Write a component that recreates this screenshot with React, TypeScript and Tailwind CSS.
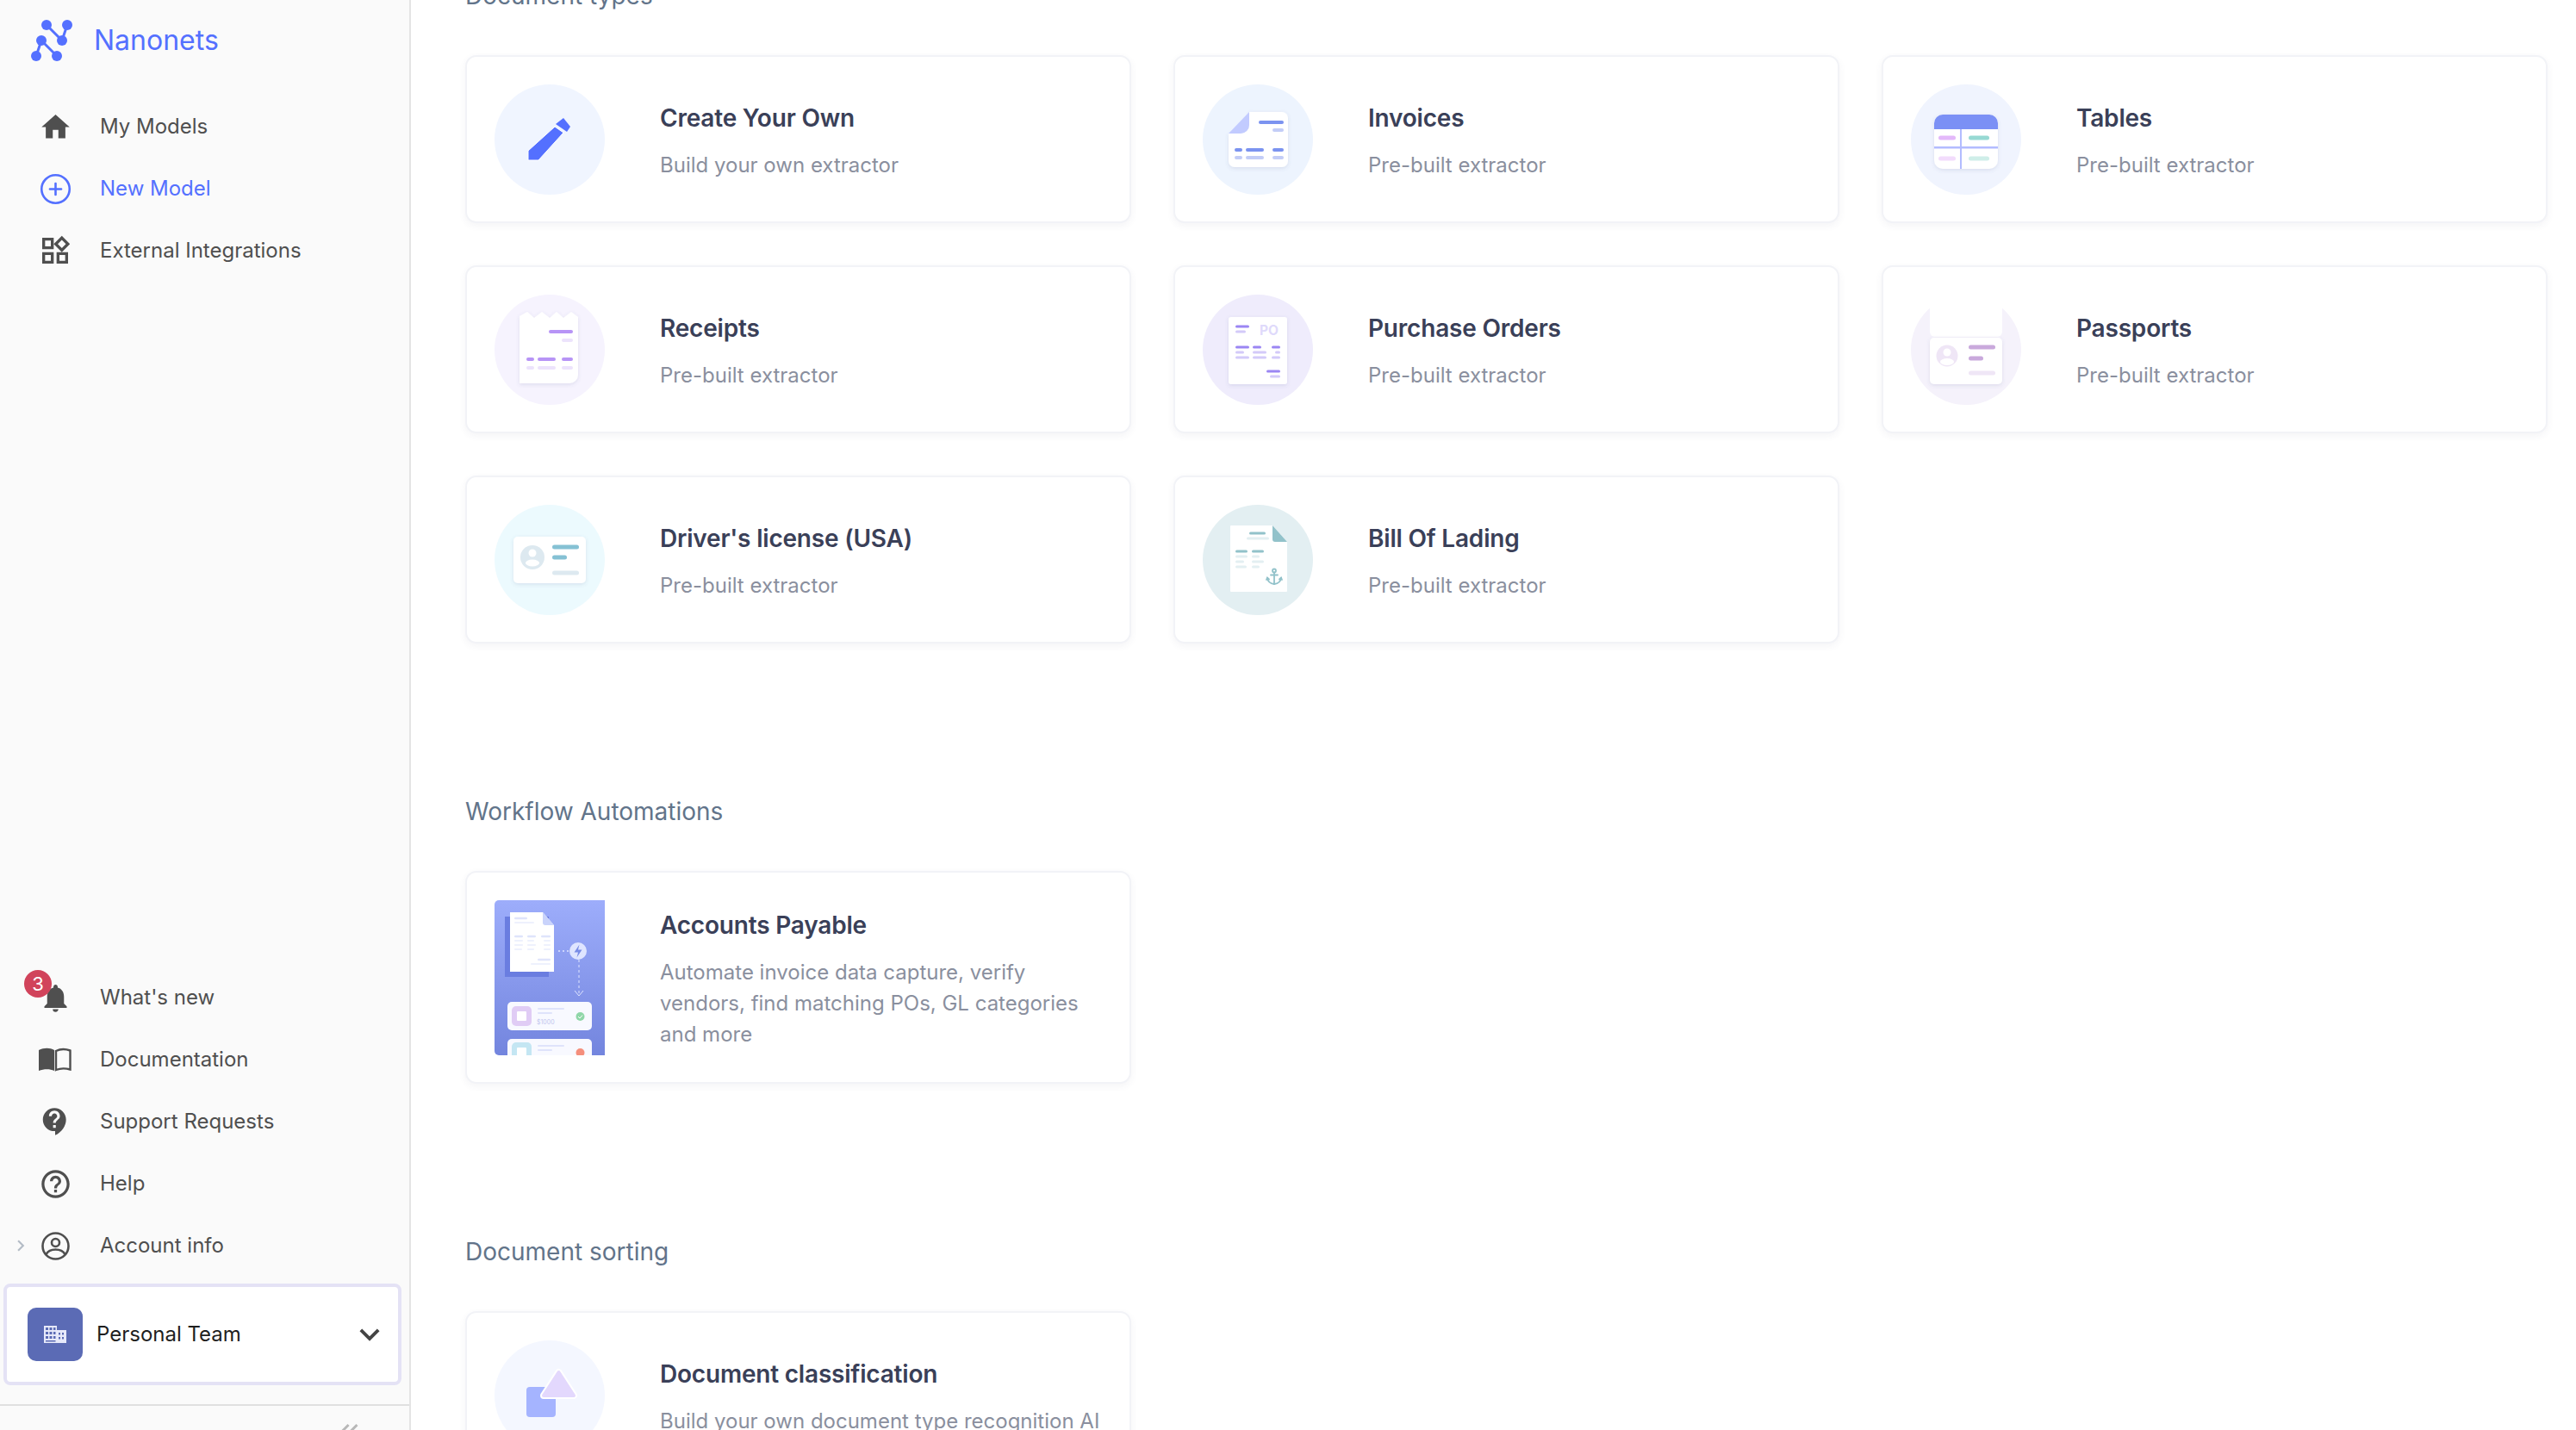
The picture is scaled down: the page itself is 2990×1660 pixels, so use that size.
import type { ReactNode } from 'react';
import { CirclePlus } from 'lucide-react';
import {
  MdChevronRight,
  MdContactSupport,
  MdExpandMore,
  MdHelpOutline,
  MdHome,
  MdKeyboardDoubleArrowLeft,
  MdNotifications,
  MdOutlineWidgets,
} from 'react-icons/md';

// rounded bar used by all the little document drawings
function Bar({ x1, x2, y, c, h = 4 }: { x1: number; x2: number; y: number; c: string; h?: number }) {
  return <rect x={x1} y={y - h / 2} width={x2 - x1} height={h} rx={h / 2} fill={c} />;
}

function Circle({ bg, children }: { bg: string; children: ReactNode }) {
  return (
    <svg viewBox="0 0 128 128" className="w-[128px] h-[128px] shrink-0">
      <defs>
        <filter id="soft" x="-20%" y="-20%" width="140%" height="140%">
          <feDropShadow dx="0" dy="1.5" stdDeviation="2" floodColor="#5a5f9a" floodOpacity="0.16" />
        </filter>
      </defs>
      <circle cx="64" cy="64" r="64" fill={bg} />
      {children}
    </svg>
  );
}

function PencilIcon() {
  return (
    <Circle bg="#f0f5ff">
      <path d="M39 77 L70 49 L80 56 L51 88 H39 Z" fill="#5470ff" stroke="#fff" strokeWidth="1" />
      <path d="M71 46 L80 39 L88 49 L84 55 Z" fill="#5470ff" />
    </Circle>
  );
}

function InvoiceIcon() {
  const d = '#7b93f0';
  const l = '#c3cdf7';
  return (
    <Circle bg="#edf4fe">
      <path
        d="M54 32 H92 a7 7 0 0 1 7 7 V89 a7 7 0 0 1 -7 7 H37 a7 7 0 0 1 -7 -7 V57 H44 a10 10 0 0 0 10 -10 Z"
        fill="#fff"
        filter="url(#soft)"
      />
      <path d="M30 57 L54 32 V47 a10 10 0 0 1 -10 10 Z" fill="#c2cbff" />
      <Bar x1={65} x2={94} y={44} c={d} />
      <Bar x1={81} x2={94} y={53} c={l} />
      <Bar x1={37} x2={46} y={76} c={d} />
      <Bar x1={50} x2={71} y={76} c={d} />
      <Bar x1={81} x2={94} y={76} c={d} />
      <Bar x1={37} x2={46} y={85} c={l} />
      <Bar x1={50} x2={71} y={85} c={l} />
      <Bar x1={81} x2={94} y={85} c={l} />
    </Circle>
  );
}

function TableIcon() {
  return (
    <Circle bg="#f0f4fe">
      <rect x="27" y="35" width="74" height="63" rx="10" fill="#fff" filter="url(#soft)" />
      <path d="M27 52 V45 a10 10 0 0 1 10 -10 H91 a10 10 0 0 1 10 10 V52 Z" fill="#7b90f5" />
      <rect x="57" y="52" width="2" height="46" fill="#b3bcff" />
      <rect x="27" y="72" width="74" height="2.5" fill="#b3bcff" />
      <Bar x1={32} x2={52} y={62} c="#e3b8fa" h={5} />
      <Bar x1={67} x2={91} y={62} c="#97d9d3" h={5} />
      <Bar x1={32} x2={52} y={86} c="#f2dcfc" h={5} />
      <Bar x1={67} x2={91} y={86} c="#cfeee9" h={5} />
    </Circle>
  );
}

function ReceiptIcon() {
  const d = '#b794f6';
  const l = '#ece3fc';
  return (
    <Circle bg="#f6f3fe">
      <path
        d="M29 25 L38 20 L46 27 L55 20 L64 27 L72 20 L80 27 L89 20 L97 26 V93 a10 10 0 0 1 -10 10 H29 Z"
        fill="#fff"
        filter="url(#soft)"
      />
      <Bar x1={63} x2={91} y={43} c={d} />
      <Bar x1={78} x2={91} y={53} c={l} />
      <Bar x1={37} x2={46} y={75} c={d} />
      <Bar x1={50} x2={71} y={75} c={d} />
      <Bar x1={78} x2={91} y={75} c={d} />
      <Bar x1={37} x2={46} y={85} c={l} />
      <Bar x1={50} x2={71} y={85} c={l} />
      <Bar x1={78} x2={91} y={85} c={l} />
    </Circle>
  );
}

function PurchaseIcon() {
  const d = '#9b86f3';
  const l = '#d3caf9';
  return (
    <Circle bg="#efecfc">
      <rect x="30" y="26" width="68" height="78" rx="3" fill="#fff" filter="url(#soft)" />
      <Bar x1={38} x2={54} y={37} c={d} h={3} />
      <Bar x1={38} x2={50} y={43} c={l} h={3} />
      <text x="66" y="47" fontFamily="Inter, sans-serif" fontWeight="700" fontSize="15.5" fill="#dfdafb">PO</text>
      <Bar x1={38} x2={54} y={61} c={d} h={3} />
      <Bar x1={58} x2={68} y={61} c={d} h={3} />
      <Bar x1={80} x2={90} y={61} c={d} h={3} />
      <Bar x1={38} x2={48} y={67} c={l} h={3} />
      <Bar x1={58} x2={74} y={67} c={l} h={3} />
      <Bar x1={84} x2={90} y={67} c={l} h={3} />
      <Bar x1={38} x2={54} y={73} c={l} h={3} />
      <Bar x1={58} x2={74} y={73} c={l} h={3} />
      <Bar x1={80} x2={90} y={73} c={l} h={3} />
      <Bar x1={74} x2={90} y={89} c={d} h={3} />
      <Bar x1={78} x2={90} y={95} c={l} h={3} />
    </Circle>
  );
}

function PassportIcon() {
  const d = '#c9a9dc';
  const l = '#efe6f6';
  return (
    <Circle bg="#f5f2fb">
      <path d="M22 0 H106 V43 a6 6 0 0 1 -6 6 H28 a6 6 0 0 1 -6 -6 Z" fill="#fff" />
      <rect x="22" y="50" width="84" height="54" rx="5" fill="#fff" filter="url(#soft)" />
      <clipPath id="pp-face">
        <circle cx="42" cy="71" r="12.5" />
      </clipPath>
      <circle cx="42" cy="71" r="12.5" fill={l} />
      <g clipPath="url(#pp-face)" fill="#fff">
        <circle cx="42" cy="67" r="4.5" />
        <ellipse cx="42" cy="78" rx="8" ry="4" />
      </g>
      <Bar x1={67} x2={98} y={61} c={d} h={5} />
      <Bar x1={67} x2={84} y={74} c={d} h={5} />
      <Bar x1={67} x2={98} y={91} c={l} h={5} />
    </Circle>
  );
}

function LicenseIcon() {
  const d = '#85c1d4';
  const l = '#dde9f0';
  return (
    <Circle bg="#ecfafe">
      <rect x="22" y="37" width="84" height="54" rx="5" fill="#fff" filter="url(#soft)" />
      <clipPath id="dl-face">
        <circle cx="44" cy="61" r="14" />
      </clipPath>
      <circle cx="44" cy="61" r="14" fill={l} />
      <g clipPath="url(#dl-face)" fill="#fff">
        <circle cx="44" cy="56" r="4.5" />
        <ellipse cx="44" cy="67.5" rx="8" ry="4" />
      </g>
      <Bar x1={67} x2={98} y={49} c={d} h={5} />
      <Bar x1={67} x2={84} y={61} c={d} h={5} />
      <Bar x1={67} x2={98} y={79} c={l} h={5} />
    </Circle>
  );
}

function LadingIcon() {
  const d = '#92c2ca';
  const l = '#e3eff2';
  return (
    <Circle bg="#e3eff2">
      <path d="M33 24 H81 L98 43 V100 a1 1 0 0 1 -1 1 H33 a1 1 0 0 1 -1 -1 V25 a1 1 0 0 1 1 -1 Z" fill="#fff" />
      <path d="M81 24 L98 43 H84 a3 3 0 0 1 -3 -3 Z" fill={d} />
      <Bar x1={54} x2={73} y={33} c={d} h={3} />
      <Bar x1={51} x2={77} y={39} c={l} h={3} />
      <Bar x1={38} x2={52} y={54} c={d} h={3} />
      <Bar x1={57} x2={71} y={54} c={d} h={3} />
      <Bar x1={38} x2={52} y={60} c={l} h={3} />
      <Bar x1={57} x2={66} y={60} c={l} h={3} />
      <Bar x1={38} x2={48} y={66} c={l} h={3} />
      <Bar x1={57} x2={71} y={66} c={l} h={3} />
      <Bar x1={38} x2={51} y={72} c={l} h={3} />
      <Bar x1={57} x2={66} y={72} c={l} h={3} />
      <g fill="none" stroke={d} strokeWidth="1.8" strokeLinecap="round">
        <circle cx="83" cy="76.5" r="2" />
        <path d="M83 78.5 V92 M79 81.5 H87" />
        <path d="M75 85 C75.5 89.5 79 91.5 83 92 C87 91.5 90.5 89.5 91 85" />
        <path d="M74 87 L75 84.5 L77 86.5 M92 87 L91 84.5 L89 86.5" />
      </g>
    </Circle>
  );
}

function SortingIcon() {
  return (
    <Circle bg="#f4f7ff">
      <rect x="37" y="54" width="34" height="35" rx="4" fill="#a5b4ff" />
      <path d="M74.5 37 L92 64 H57 Z" fill="#fff" stroke="#fff" strokeWidth="8" strokeLinejoin="round" />
      <path d="M74.5 37 L92 64 H57 Z" fill="#e3d8fd" stroke="#e3d8fd" strokeWidth="4" strokeLinejoin="round" />
    </Circle>
  );
}

function PayableArt() {
  return (
    <svg viewBox="0 0 128 180" className="w-[128px] h-[180px] shrink-0 rounded-l-[5px]">
      <defs>
        <linearGradient id="ap-bg" x1="0" y1="0" x2="0" y2="1">
          <stop offset="0" stopColor="#9dadfb" />
          <stop offset="1" stopColor="#7385de" />
        </linearGradient>
      </defs>
      <rect width="128" height="180" fill="url(#ap-bg)" />
      <rect x="12" y="19" width="51" height="70" fill="#6a7de0" />
      <path d="M18 14 H56 L69 29 V83 H18 Z" fill="#fff" />
      <path d="M56 14 L69 29 H59 a3 3 0 0 1 -3 -3 Z" fill="#c9d3fb" />
      <Bar x1={23} x2={38} y={21} c="#dfe4fb" h={2.5} />
      <Bar x1={23} x2={46} y={26} c="#eef1fd" h={2} />
      <Bar x1={23} x2={33} y={42} c="#dfe4fb" h={2.5} />
      <Bar x1={38} x2={48} y={42} c="#dfe4fb" h={2.5} />
      <Bar x1={54} x2={65} y={42} c="#dfe4fb" h={2.5} />
      <Bar x1={23} x2={33} y={47} c="#eef1fd" h={2} />
      <Bar x1={38} x2={46} y={47} c="#eef1fd" h={2} />
      <Bar x1={57} x2={65} y={47} c="#eef1fd" h={2} />
      <Bar x1={23} x2={33} y={52} c="#eef1fd" h={2} />
      <Bar x1={38} x2={48} y={52} c="#eef1fd" h={2} />
      <Bar x1={57} x2={65} y={52} c="#eef1fd" h={2} />
      <Bar x1={23} x2={32} y={57} c="#eef1fd" h={2} />
      <Bar x1={38} x2={46} y={57} c="#eef1fd" h={2} />
      <Bar x1={57} x2={65} y={57} c="#eef1fd" h={2} />
      <Bar x1={50} x2={65} y={69} c="#dfe4fb" h={2.5} />
      <Bar x1={42} x2={65} y={74} c="#eef1fd" h={2} />
      <path d="M74 59 H88" stroke="#dfe5ff" strokeWidth="1.5" strokeDasharray="2 3" />
      <circle cx="97" cy="59" r="10" fill="#dfe5ff" />
      <path d="M98.5 51.5 L92.5 60.5 H97 L95.5 66.5 L101.5 57.5 H97 Z" fill="#7a8de6" />
      <path d="M98 69 V108" stroke="#dfe5ff" strokeWidth="1" strokeDasharray="3 3" />
      <path d="M93 105 L98 111 L103 105" stroke="#dfe5ff" strokeWidth="1" fill="none" />
      <rect x="15" y="118" width="98" height="33" rx="5" fill="#f8f9ff" />
      <rect x="20" y="123" width="23" height="23" rx="5" fill="#e0ccf5" />
      <rect x="26" y="129" width="11" height="11" rx="1" fill="#fff" />
      <Bar x1={50} x2={81} y={126} c="#dfe3fb" h={2} />
      <Bar x1={50} x2={67} y={131} c="#dfe3fb" h={2} />
      <text x="49" y="144" fontFamily="Inter, sans-serif" fontSize="7" fill="#c1c6ee">$1000</text>
      <circle cx="99.5" cy="135" r="5" fill="#8fd6a8" />
      <path d="M97 135 L99 137 L102 133.5" stroke="#fff" strokeWidth="1" fill="none" />
      <rect x="15" y="161" width="98" height="33" rx="5" fill="#f8f9ff" />
      <rect x="20" y="165" width="23" height="23" rx="5" fill="#c4e6f3" />
      <rect x="26" y="171" width="11" height="11" rx="1" fill="#fff" />
      <Bar x1={50} x2={81} y={169} c="#dfe3fb" h={2} />
      <Bar x1={50} x2={67} y={174} c="#dfe3fb" h={2} />
      <circle cx="99.5" cy="177" r="5" fill="#f58f7c" />
    </svg>
  );
}

function NanonetsLogo() {
  const nodes = [
    [18, 6],
    [42, 6],
    [36, 24],
    [12, 24],
    [6, 42],
    [30, 42],
  ];
  return (
    <svg viewBox="0 0 48 48" className="w-[48px] h-[48px]" fill="#5470ff">
      <path d="M18 6 L36 24 L42 6 M12 24 L30 42 M12 24 L6 42" stroke="#5470ff" strokeWidth="3" fill="none" />
      {nodes.map(([cx, cy]) => (
        <circle key={`${cx}-${cy}`} cx={cx} cy={cy} r="6" />
      ))}
    </svg>
  );
}

function BookIcon() {
  return (
    <svg viewBox="0 0 38 28" className="w-[38px] h-[28px]" fill="#4f4f4f">
      <path d="M0 3 C6 0 13 0 18 3 V27 C13 24.5 6 24.5 0 27 Z" />
      <path
        d="M20 4 C25 1.5 31 1.5 36.5 3.5 V25.5 C31 24 25 24 20 26 Z"
        fill="none"
        stroke="#4f4f4f"
        strokeWidth="2.4"
      />
    </svg>
  );
}

function AccountIcon() {
  return (
    <svg viewBox="0 0 33 33" className="w-[33px] h-[33px]" fill="none" stroke="#4f4f4f" strokeWidth="2.6">
      <circle cx="16.5" cy="16.5" r="15" />
      <circle cx="16.5" cy="12.5" r="4.5" />
      <path d="M5.5 26 C8 21.5 12 20.5 16.5 20.5 C21 20.5 25 21.5 27.5 26" />
    </svg>
  );
}

function BuildingIcon() {
  return (
    <svg viewBox="0 0 26 20" className="w-[26px] h-[20px]" fill="#e6e9fa">
      <path d="M0 0 H15 V5 H26 V20 H0 Z M2 2 V5 H5 V2 Z M6.5 2 V5 H9.5 V2 Z M11 2 V5 H13.5 V2 Z M2 7 V10 H5 V7 Z M6.5 7 V10 H9.5 V7 Z M11 7 V10 H13.5 V7 Z M2 12 V15 H5 V12 Z M6.5 12 V15 H9.5 V12 Z M11 12 V15 H13.5 V12 Z M2 17 V18.5 H13.5 V17 Z M17 8 V10.5 H19 V8 Z M21 8 V10.5 H23 V8 Z M17 13 V15.5 H19 V13 Z M21 13 V15.5 H23 V13 Z" fillRule="evenodd" />
    </svg>
  );
}

function NavRow({ icon, label, active, caret }: { icon: ReactNode; label: string; active?: boolean; caret?: boolean }) {
  return (
    <div className="relative flex items-center h-[72px] pl-[44px] gap-[32px]">
      {caret && <MdChevronRight size={26} className="absolute left-[11px] text-[#b4bcc6]" />}
      <span className="w-[40px] flex items-center justify-center">{icon}</span>
      <span className={active ? 'text-[24px] text-[#5470ff]' : 'text-[24px] text-[#4f4f4f]'}>{label}</span>
    </div>
  );
}

function Card({ icon, title, desc, tall }: { icon: ReactNode; title: string; desc: string; tall?: boolean }) {
  return (
    <div
      className={`flex ${tall ? 'h-[247px]' : 'h-[195px]'} items-center gap-[64px] px-[32px] bg-white border-2 border-[#f2f3f7] rounded-[13px] shadow-[0_3px_8px_rgba(60,64,100,0.06)]`}
    >
      {icon}
      <div className="flex flex-col gap-[19px] pt-[5px]">
        <div className="text-[28px] leading-[36px] font-semibold tracking-[-0.2px] text-[#3a4058]">{title}</div>
        <div className="text-[24px] leading-[36px] text-[#8a8f9e]">{desc}</div>
      </div>
    </div>
  );
}

function Section({ title, children }: { title: string; children: ReactNode }) {
  return (
    <section>
      <h2 className="h-[44px] leading-[44px] mb-[47px] text-[28px] font-normal text-[#62748a]">{title}</h2>
      <div className="grid grid-cols-[repeat(3,772.5px)] gap-x-[49.5px] gap-y-[49px]">{children}</div>
    </section>
  );
}

const prebuilt = 'Pre-built extractor';

export default function App() {
  return (
    <div className="flex w-[2990px] h-[1660px] overflow-hidden bg-white font-['Inter',sans-serif]">
      <aside className="flex flex-col justify-between w-[477px] h-full shrink-0 bg-[#fafafa] border-r-2 border-[#e4e4e4]">
        <div>
          <div className="flex items-center h-[94px] pl-[36px] gap-[25px] mb-[17px]">
            <NanonetsLogo />
            <span className="text-[32px] text-[#5470ff]">Nanonets</span>
          </div>
          <NavRow icon={<MdHome size={39} className="text-[#4f4f4f]" />} label="My Models" />
          <NavRow icon={<CirclePlus size={39} strokeWidth={1.6} className="text-[#5470ff]" />} label="New Model" active />
          <NavRow icon={<MdOutlineWidgets size={40} className="text-[#4f4f4f]" />} label="External Integrations" />
        </div>
        <div>
          <div className="relative">
            <span className="absolute left-[28px] top-[4px] z-10 flex items-center justify-center w-[32px] h-[32px] rounded-full bg-[#d1435b] text-white text-[22px]">
              3
            </span>
            <NavRow icon={<MdNotifications size={39} className="text-[#4f4f4f]" />} label="What's new" />
          </div>
          <NavRow icon={<BookIcon />} label="Documentation" />
          <NavRow icon={<MdContactSupport size={38} className="text-[#4f4f4f]" />} label="Support Requests" />
          <NavRow icon={<MdHelpOutline size={39} className="text-[#4f4f4f]" />} label="Help" />
          <NavRow icon={<AccountIcon />} label="Account info" caret />
          <div className="flex items-center w-[462px] h-[118px] ml-[4px] mt-[8px] pl-[24px] pr-[10px] bg-white border-4 border-[#e4e2f5] rounded-[8px]">
            <span className="flex items-center justify-center w-[64px] h-[62px] rounded-[10px] bg-[#5b6bb5]">
              <BuildingIcon />
            </span>
            <span className="ml-[16px] flex-1 text-[24px] text-[#1f1f1f]">Personal Team</span>
            <MdExpandMore size={46} className="text-[#444444]" />
          </div>
          <div className="h-[30px] mt-[22px] border-t-2 border-[#e0e0e0] flex justify-end pr-[52px] overflow-hidden">
            <MdKeyboardDoubleArrowLeft size={36} className="mt-[12px] text-[#b8b8b8]" />
          </div>
        </div>
      </aside>

      <main className="flex-1 pl-[63px] -mt-[27px] flex flex-col gap-[173px]">
        <Section title="Document types">
          <Card icon={<PencilIcon />} title="Create Your Own" desc="Build your own extractor" />
          <Card icon={<InvoiceIcon />} title="Invoices" desc={prebuilt} />
          <Card icon={<TableIcon />} title="Tables" desc={prebuilt} />
          <Card icon={<ReceiptIcon />} title="Receipts" desc={prebuilt} />
          <Card icon={<PurchaseIcon />} title="Purchase Orders" desc={prebuilt} />
          <Card icon={<PassportIcon />} title="Passports" desc={prebuilt} />
          <Card icon={<LicenseIcon />} title="Driver's license (USA)" desc={prebuilt} />
          <Card icon={<LadingIcon />} title="Bill Of Lading" desc={prebuilt} />
        </Section>
        <Section title="Workflow Automations">
          <Card
            tall
            icon={<PayableArt />}
            title="Accounts Payable"
            desc="Automate invoice data capture, verify vendors, find matching POs, GL categories and more"
          />
        </Section>
        <Section title="Document sorting">
          <Card icon={<SortingIcon />} title="Document classification" desc="Build your own document type recognition AI" />
        </Section>
      </main>
    </div>
  );
}
